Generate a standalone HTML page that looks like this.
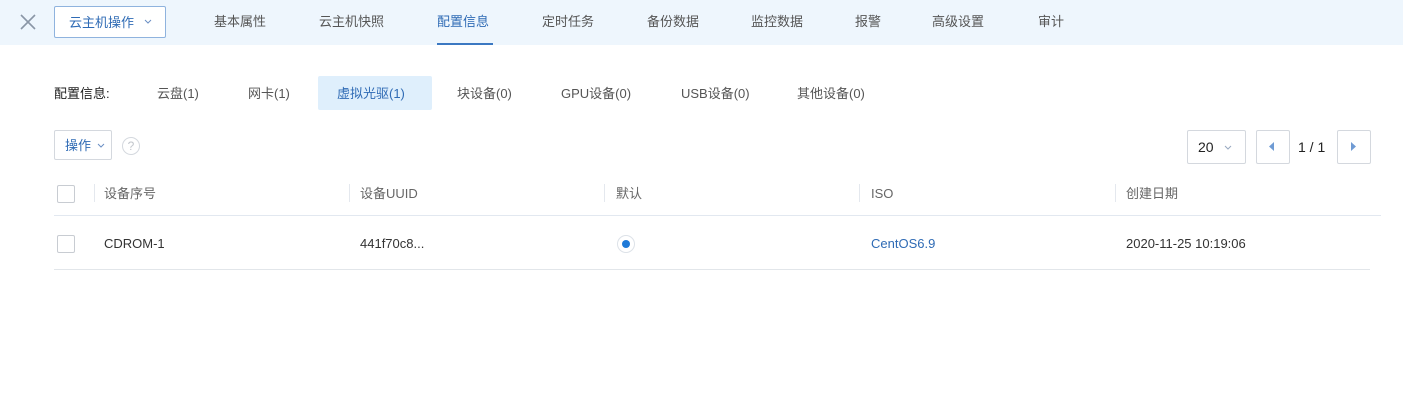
<!DOCTYPE html>
<html><head><meta charset="utf-8"><style>
*{margin:0;padding:0;box-sizing:border-box}
body{width:1403px;height:414px;background:#fff;font-family:"Liberation Sans","Noto Sans CJK SC",sans-serif;font-size:13px;line-height:18px;color:#333;position:relative;overflow:hidden}
.a{position:absolute;white-space:nowrap;line-height:18px}
.hdr{position:absolute;left:0;top:0;width:1403px;height:45px;background:#eef6fd}
.t{top:13px;color:#555;font-size:13px}
.s{top:85px;color:#555}
.cb{width:18px;height:18px;border:1px solid #c8ccd2;border-radius:2px;background:#fff}
.sep{width:1px;height:18px;background:#e4e8ee;top:184px}
.h{top:185px;color:#666}
.r{top:235px;color:#333}
</style></head><body>
<div class="hdr"></div>
<svg class="a" style="left:19px;top:13px" width="18" height="18" viewBox="0 0 18 18"><path d="M2 2L16 16M16 2L2 16" stroke="#8a96a6" stroke-width="1.6"/></svg>
<div class="a" style="left:54px;top:6px;width:112px;height:32px;border:1px solid #8fb3de;background:#fff;border-radius:2px"></div>
<div class="a" style="left:69px;top:14px;color:#2f6bb5">云主机操作</div>
<svg class="a" style="left:144px;top:19px" width="8" height="6"><path d="M1 1L4 4L7 1" stroke="#6b8fc4" fill="none"/></svg>
<div class="a t" style="left:214px">基本属性</div>
<div class="a t" style="left:319px">云主机快照</div>
<div class="a t" style="left:437px;color:#2f6bb5">配置信息</div>
<div class="a" style="left:437px;top:43px;width:56px;height:2px;background:#3b78c2"></div>
<div class="a t" style="left:542px">定时任务</div>
<div class="a t" style="left:647px">备份数据</div>
<div class="a t" style="left:751px">监控数据</div>
<div class="a t" style="left:855px">报警</div>
<div class="a t" style="left:932px">高级设置</div>
<div class="a t" style="left:1038px">审计</div>

<div class="a s" style="left:54px;color:#222">配置信息:</div>
<div class="a s" style="left:157px">云盘(1)</div>
<div class="a s" style="left:248px">网卡(1)</div>
<div class="a" style="left:318px;top:76px;width:114px;height:34px;background:#dfeffc;border-radius:2px"></div>
<div class="a s" style="left:337px;color:#2f6bb5">虚拟光驱(1)</div>
<div class="a s" style="left:457px">块设备(0)</div>
<div class="a s" style="left:561px">GPU设备(0)</div>
<div class="a s" style="left:681px">USB设备(0)</div>
<div class="a s" style="left:797px">其他设备(0)</div>

<div class="a" style="left:54px;top:130px;width:58px;height:30px;border:1px solid #d4d8de;border-radius:2px"></div>
<div class="a" style="left:65px;top:137px;color:#2f6bb5">操作</div>
<svg class="a" style="left:97px;top:143px" width="8" height="6"><path d="M1 1L4 4L7 1" stroke="#6b8fc4" fill="none"/></svg>
<div class="a" style="left:122px;top:137px;width:18px;height:18px;border:1px solid #d4d8de;border-radius:50%;color:#c2c6cc;font-size:12px;text-align:center;line-height:16px">?</div>

<div class="a" style="left:1187px;top:130px;width:59px;height:34px;border:1px solid #d4d8de;border-radius:2px"></div>
<div class="a" style="left:1198px;top:138px;color:#222;font-size:14px">20</div>
<svg class="a" style="left:1224px;top:145px" width="8" height="6"><path d="M1 1L4 4L7 1" stroke="#98a8c0" fill="none"/></svg>
<div class="a" style="left:1256px;top:130px;width:34px;height:34px;border:1px solid #d4d8de;border-radius:2px"></div>
<svg class="a" style="left:1269px;top:142px" width="6" height="9"><path d="M5 0L0 4.5L5 9Z" fill="#6f9bd4"/></svg>
<div class="a" style="left:1298px;top:138px;color:#222;font-size:14px">1 / 1</div>
<div class="a" style="left:1337px;top:130px;width:34px;height:34px;border:1px solid #d4d8de;border-radius:2px"></div>
<svg class="a" style="left:1351px;top:142px" width="6" height="9"><path d="M0 0L5 4.5L0 9Z" fill="#6f9bd4"/></svg>

<div class="a cb" style="left:57px;top:185px"></div>
<div class="a sep" style="left:94px"></div>
<div class="a sep" style="left:349px"></div>
<div class="a sep" style="left:604px"></div>
<div class="a sep" style="left:859px"></div>
<div class="a sep" style="left:1115px"></div>
<div class="a h" style="left:104px">设备序号</div>
<div class="a h" style="left:360px">设备UUID</div>
<div class="a h" style="left:616px">默认</div>
<div class="a h" style="left:871px">ISO</div>
<div class="a h" style="left:1126px">创建日期</div>
<div class="a" style="left:54px;top:215px;width:1327px;height:1px;background:#e2e8f0"></div>

<div class="a cb" style="left:57px;top:235px"></div>
<div class="a r" style="left:104px">CDROM-1</div>
<div class="a r" style="left:360px">441f70c8...</div>
<div class="a" style="left:617px;top:235px;width:18px;height:18px;border:1px solid #dde2e8;border-radius:50%;background:#fff"></div>
<div class="a" style="left:622px;top:240px;width:8px;height:8px;border-radius:50%;background:#1f7ad8"></div>
<div class="a r" style="left:871px;color:#2f6bb5">CentOS6.9</div>
<div class="a r" style="left:1126px">2020-11-25 10:19:06</div>
<div class="a" style="left:54px;top:269px;width:1316px;height:1px;background:#e2e6ea"></div>
</body></html>
